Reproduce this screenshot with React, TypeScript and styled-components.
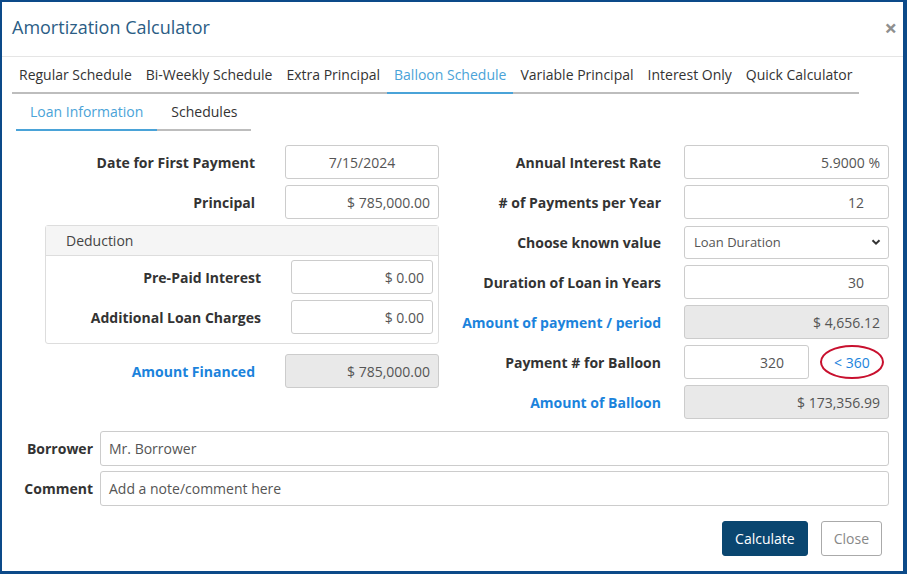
import * as React from 'react';
import styled, { createGlobalStyle } from 'styled-components';

const Global = createGlobalStyle`
  html, body { margin: 0; padding: 0; background: #fff; }
  * { box-sizing: border-box; }
`;

const Frame = styled.div`
  width: 907px;
  height: 574px;
  border: 2px solid #0c4a89;
  border-right-width: 4px;
  border-bottom-width: 3px;
  background: #fff;
  font-family: "Open Sans", "Noto Sans", sans-serif;
  color: #333;
  display: flex;
  flex-direction: column;
`;

const Header = styled.header`
  height: 55px;
  border-bottom: 1px solid #e5e5e5;
  display: flex;
  align-items: center;
  justify-content: space-between;
  padding: 0 6px 5px 10px;
`;

const Title = styled.h1`
  margin: 0;
  font-size: 18px;
  font-weight: 400;
  color: #2b5d85;
`;

const CloseX = styled.span`
  font-size: 22px;
  font-weight: 700;
  color: #8f8f8f;
  line-height: 1;
`;

const TabBar = styled.div<{ indent: number }>`
  display: flex;
  align-self: flex-start;
  margin-left: ${({ indent }) => indent}px;
  border-bottom: 2px solid #bdbdbd;
`;

const Tab = styled.div<{ active?: boolean; pad: number; padV: string }>`
  font-size: 14px;
  line-height: 19px;
  padding: ${({ padV, pad }) => `${padV.split(' ')[0]} ${pad}px ${padV.split(' ')[1]}`};
  color: ${({ active }) => (active ? '#4aa3d8' : '#333')};
  margin-bottom: -2px;
  border-bottom: 2px solid ${({ active }) => (active ? '#4aa3d8' : 'transparent')};
  white-space: nowrap;
`;

const Form = styled.div`
  display: grid;
  grid-template-columns: 448px 1fr;
  margin-top: 14px;
`;

const Column = styled.div`
  display: flex;
  flex-direction: column;
  gap: 6px;
`;

const Row = styled.div<{ labelW: number; gap: number }>`
  display: flex;
  align-items: center;
  height: 34px;
  & > label {
    width: ${({ labelW }) => labelW}px;
    margin-right: ${({ gap }) => gap}px;
    text-align: right;
    flex-shrink: 0;
  }
`;

const Label = styled.label<{ blue?: boolean }>`
  font-size: 14px;
  font-weight: 700;
  color: ${({ blue }) => (blue ? '#1b83dc' : '#333')};
  white-space: nowrap;
`;

const Field = styled.div<{ w: number; readOnly?: boolean; center?: boolean }>`
  width: ${({ w }) => w}px;
  height: 34px;
  border: 1px solid #ccc;
  border-radius: 3px;
  background: ${({ readOnly }) => (readOnly ? '#e9e9e9' : '#fff')};
  font-size: 14px;
  color: #555;
  display: flex;
  align-items: center;
  justify-content: ${({ center }) => (center ? 'center' : 'flex-end')};
  padding: 0 8px;
  flex-shrink: 0;
`;

const Select = styled.div`
  width: 205px;
  height: 33px;
  border: 1px solid #ccc;
  border-radius: 3px;
  font-size: 13px;
  color: #555;
  display: flex;
  align-items: center;
  justify-content: space-between;
  padding: 0 6px 0 9px;
`;

const Panel = styled.div`
  margin-left: 43px;
  width: 394px;
  border: 1px solid #ddd;
  border-radius: 3px;
  margin-bottom: 4px;
`;

const PanelHead = styled.div`
  height: 30px;
  background: #f5f5f5;
  border-bottom: 1px solid #ddd;
  font-size: 14px;
  color: #444;
  display: flex;
  align-items: center;
  padding-left: 20px;
`;

const PanelBody = styled.div`
  display: flex;
  flex-direction: column;
  gap: 6px;
  padding: 4px 0 9px 0;
`;

const Inline = styled.div`
  display: flex;
  align-items: center;
`;

const LinkWrap = styled.div`
  position: relative;
  margin-left: 25px;
  font-size: 14px;
  color: #1b83dc;
`;

// red annotation ring drawn over the "< 360" link
const Ring = styled.svg`
  position: absolute;
  left: -15px;
  top: -10px;
`;

const Bottom = styled.div`
  display: flex;
  flex-direction: column;
  gap: 6px;
  margin-top: 12px;
`;

const WideRow = styled.div`
  display: flex;
  align-items: center;
  height: 34px;
  & > label {
    width: 91px;
    margin-right: 7px;
    text-align: right;
  }
`;

const WideField = styled.div`
  width: 789px;
  height: 35px;
  border: 1px solid #ccc;
  border-radius: 3px;
  font-size: 14px;
  color: #555;
  display: flex;
  align-items: center;
  padding-left: 8px;
`;

const Footer = styled.div`
  display: flex;
  justify-content: flex-end;
  gap: 13px;
  padding-right: 21px;
  margin-top: 16px;
`;

const Button = styled.button<{ primary?: boolean }>`
  height: 35px;
  font-family: inherit;
  font-size: 14px;
  border-radius: 3px;
  padding: 0 12px;
  border: 1px solid ${({ primary }) => (primary ? '#0a4670' : '#aaa')};
  background: ${({ primary }) => (primary ? '#0a4670' : '#fff')};
  color: ${({ primary }) => (primary ? '#fff' : '#888')};
`;

const tabs = [
  'Regular Schedule',
  'Bi-Weekly Schedule',
  'Extra Principal',
  'Balloon Schedule',
  'Variable Principal',
  'Interest Only',
  'Quick Calculator',
];

const Chevron = () => (
  <svg width="12" height="12" viewBox="0 0 12 12">
    <path d="M2.5 4.2 L6 7.7 L9.5 4.2" fill="none" stroke="#333" strokeWidth="2" />
  </svg>
);

export default function App() {
  return (
    <Frame>
      <Global />
      <Header>
        <Title>Amortization Calculator</Title>
        <CloseX>×</CloseX>
      </Header>
      <TabBar indent={10} style={{ marginTop: 5 }}>
        {tabs.map((t) => (
          <Tab key={t} pad={7} padV="3px 8px" active={t === 'Balloon Schedule'}>
            {t}
          </Tab>
        ))}
      </TabBar>
      <TabBar indent={14} style={{ marginTop: 2 }}>
        <Tab pad={14} padV="6px 8px" active>Loan Information</Tab>
        <Tab pad={14} padV="6px 8px">Schedules</Tab>
      </TabBar>
      <Form>
        <Column>
          <Row labelW={253} gap={30}>
            <Label>Date for First Payment</Label>
            <Field w={154} center>7/15/2024</Field>
          </Row>
          <Row labelW={253} gap={30}>
            <Label>Principal</Label>
            <Field w={154}>$ 785,000.00</Field>
          </Row>
          <Panel>
            <PanelHead>Deduction</PanelHead>
            <PanelBody>
              <Row labelW={215} gap={30}>
                <Label>Pre-Paid Interest</Label>
                <Field w={142}>$ 0.00</Field>
              </Row>
              <Row labelW={215} gap={30}>
                <Label>Additional Loan Charges</Label>
                <Field w={142}>$ 0.00</Field>
              </Row>
            </PanelBody>
          </Panel>
          <Row labelW={253} gap={30}>
            <Label blue>Amount Financed</Label>
            <Field w={154} readOnly>$ 785,000.00</Field>
          </Row>
        </Column>
        <Column>
          <Row labelW={211} gap={23}>
            <Label>Annual Interest Rate</Label>
            <Field w={205}>5.9000 %</Field>
          </Row>
          <Row labelW={211} gap={23}>
            <Label># of Payments per Year</Label>
            <Field w={205} style={{ paddingRight: 24 }}>12</Field>
          </Row>
          <Row labelW={211} gap={23}>
            <Label>Choose known value</Label>
            <Select>
              Loan Duration
              <Chevron />
            </Select>
          </Row>
          <Row labelW={211} gap={23}>
            <Label>Duration of Loan in Years</Label>
            <Field w={205} style={{ paddingRight: 24 }}>30</Field>
          </Row>
          <Row labelW={211} gap={23}>
            <Label blue>Amount of payment / period</Label>
            <Field w={205} readOnly>$ 4,656.12</Field>
          </Row>
          <Row labelW={211} gap={23}>
            <Label>Payment # for Balloon</Label>
            <Inline>
              <Field w={125} style={{ paddingRight: 24 }}>320</Field>
              <LinkWrap>
                &lt; 360
                <Ring width="66" height="38" viewBox="0 0 66 38">
                  <ellipse cx="33" cy="19" rx="31" ry="16" fill="none" stroke="#c8102e" strokeWidth="2" />
                </Ring>
              </LinkWrap>
            </Inline>
          </Row>
          <Row labelW={211} gap={23}>
            <Label blue>Amount of Balloon</Label>
            <Field w={205} readOnly>$ 173,356.99</Field>
          </Row>
        </Column>
      </Form>
      <Bottom>
        <WideRow>
          <Label>Borrower</Label>
          <WideField>Mr. Borrower</WideField>
        </WideRow>
        <WideRow>
          <Label>Comment</Label>
          <WideField>Add a note/comment here</WideField>
        </WideRow>
      </Bottom>
      <Footer>
        <Button primary>Calculate</Button>
        <Button>Close</Button>
      </Footer>
    </Frame>
  );
}
